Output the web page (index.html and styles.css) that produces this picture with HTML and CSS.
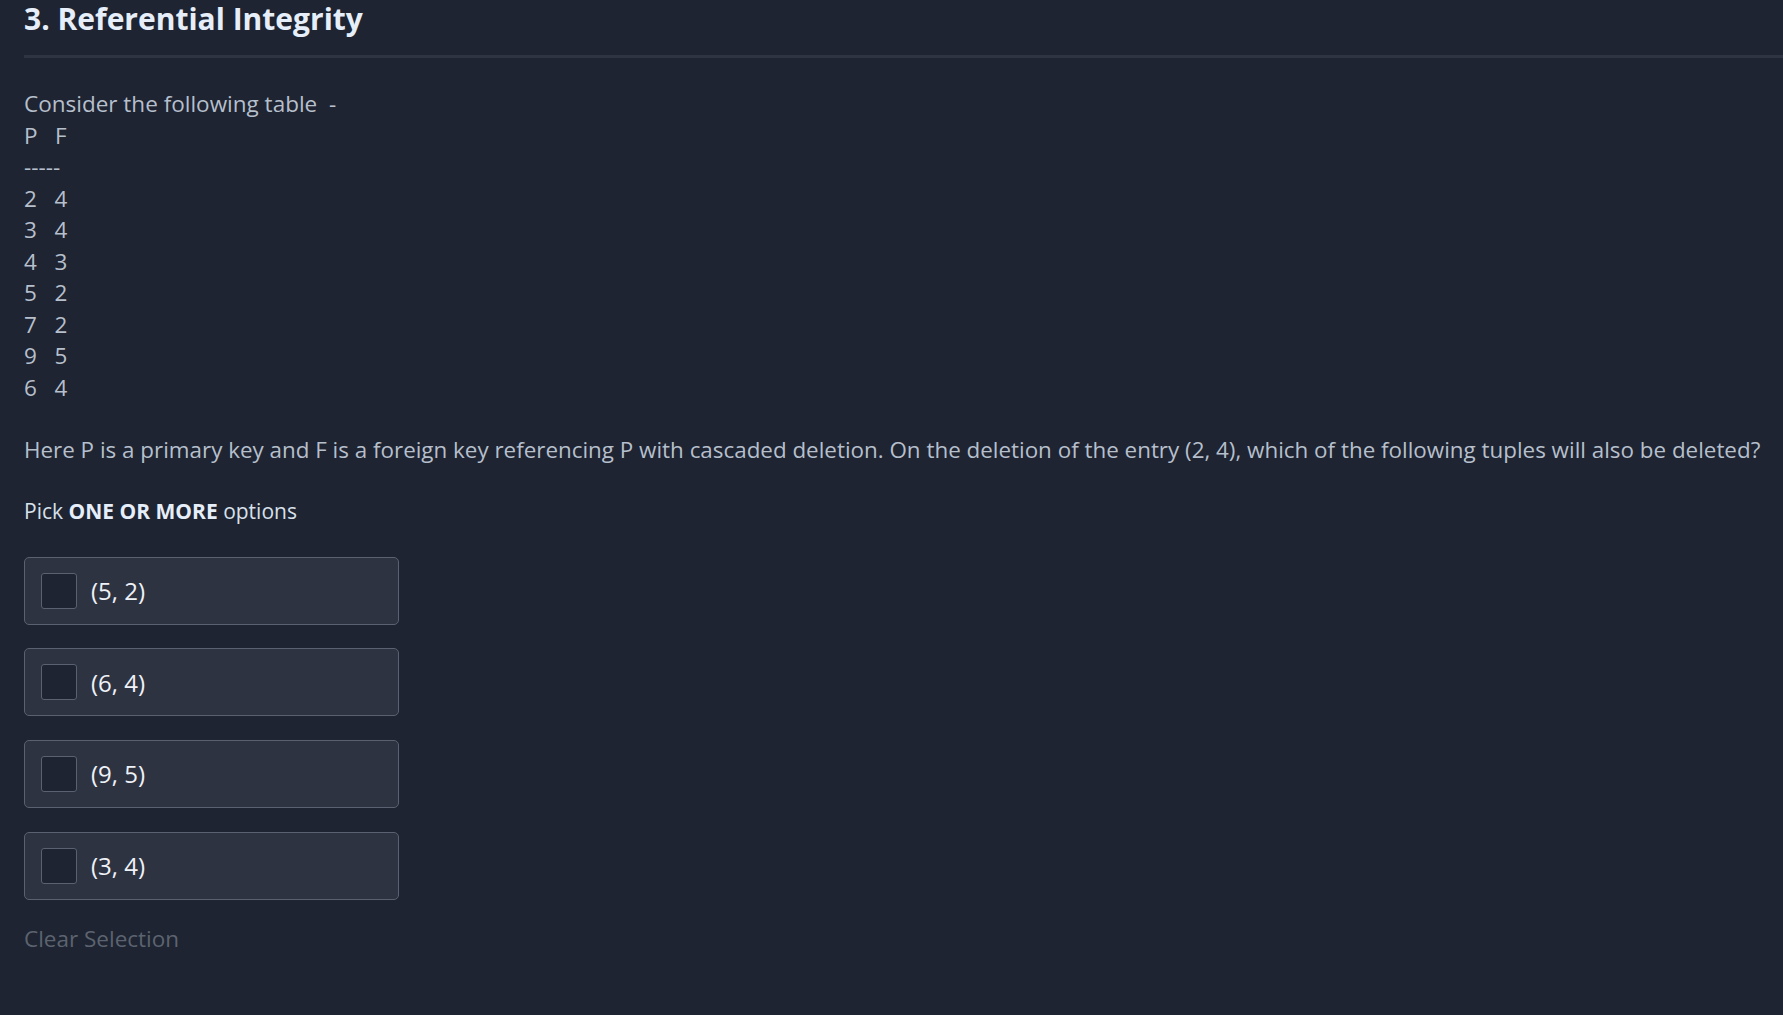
FILE: index.html
```html
<!DOCTYPE html>
<html>
<head>
    <meta charset="utf-8">
    <link rel="stylesheet" href="styles.css">
</head>
<body>
    <div class="question" id="q3">
        <h2 class="q-title">3. Referential Integrity</h2>

        <div class="q-statement">
            <div class="q-table">Consider the following table  -
P   F
-----
2   4
3   4
4   3
5   2
7   2
9   5
6   4</div>
            <p class="q-text">Here P is a primary key and F is a foreign key referencing P with cascaded deletion. On the deletion of the entry (2, 4), which of the following tuples will also be deleted?</p>
        </div>

        <div class="q-hint">Pick <strong>ONE OR MORE</strong> options</div>

        <div class="options">
            <label class="option"><span class="check"></span><span class="option-label">(5, 2)</span></label>
            <label class="option"><span class="check"></span><span class="option-label">(6, 4)</span></label>
            <label class="option"><span class="check"></span><span class="option-label">(9, 5)</span></label>
            <label class="option"><span class="check"></span><span class="option-label">(3, 4)</span></label>
        </div>

        <a class="clear-btn">Clear Selection</a>
    </div>
</body>
</html>
```

FILE: styles.css
```css
html, body {
    margin: 0;
    padding: 0;
    background: #1e2431;
}
body {
    font-family: "Open Sans", "Noto Sans", sans-serif;
    color: #b6bfcc;
    height: 1015px;
    overflow: hidden;
}
.question {
    padding: 0 0 0 24px;
}
.q-title {
    margin: 0;
    padding: 0 0 17px;
    font-size: 30px;
    line-height: 38px;
    font-weight: 700;
    color: #e6eefa;
    border-bottom: 3px solid #2e3441;
}
.q-statement {
    padding-top: 30px;
}
.q-table {
    white-space: pre;
    font-size: 22.5px;
    line-height: 31.5px;
}
.q-text {
    margin: 31px 0 0;
    font-size: 22.4px;
    line-height: 31.5px;
}
.q-hint {
    margin-top: 30px;
    font-size: 21px;
    line-height: 31.5px;
    color: #d8e0ec;
}
.q-hint strong {
    color: #e6eefa;
    font-weight: 700;
}
.options {
    margin-top: 29.5px;
    display: flex;
    flex-direction: column;
    gap: 23.7px;
}
.option {
    width: 375px;
    height: 68px;
    box-sizing: border-box;
    display: flex;
    align-items: center;
    gap: 14px;
    padding: 0 16px;
    background: #2e3341;
    border: 1px solid #5a6170;
    border-radius: 5px;
}
.check {
    width: 36px;
    height: 36px;
    box-sizing: border-box;
    background: #1e2431;
    border: 1px solid #5a6170;
    border-radius: 3px;
}
.option-label {
    font-size: 24px;
    color: #eef2f8;
}
.clear-btn {
    display: inline-block;
    margin-top: 23.5px;
    font-size: 22.5px;
    line-height: 31.5px;
    color: #5c6370;
}
```
